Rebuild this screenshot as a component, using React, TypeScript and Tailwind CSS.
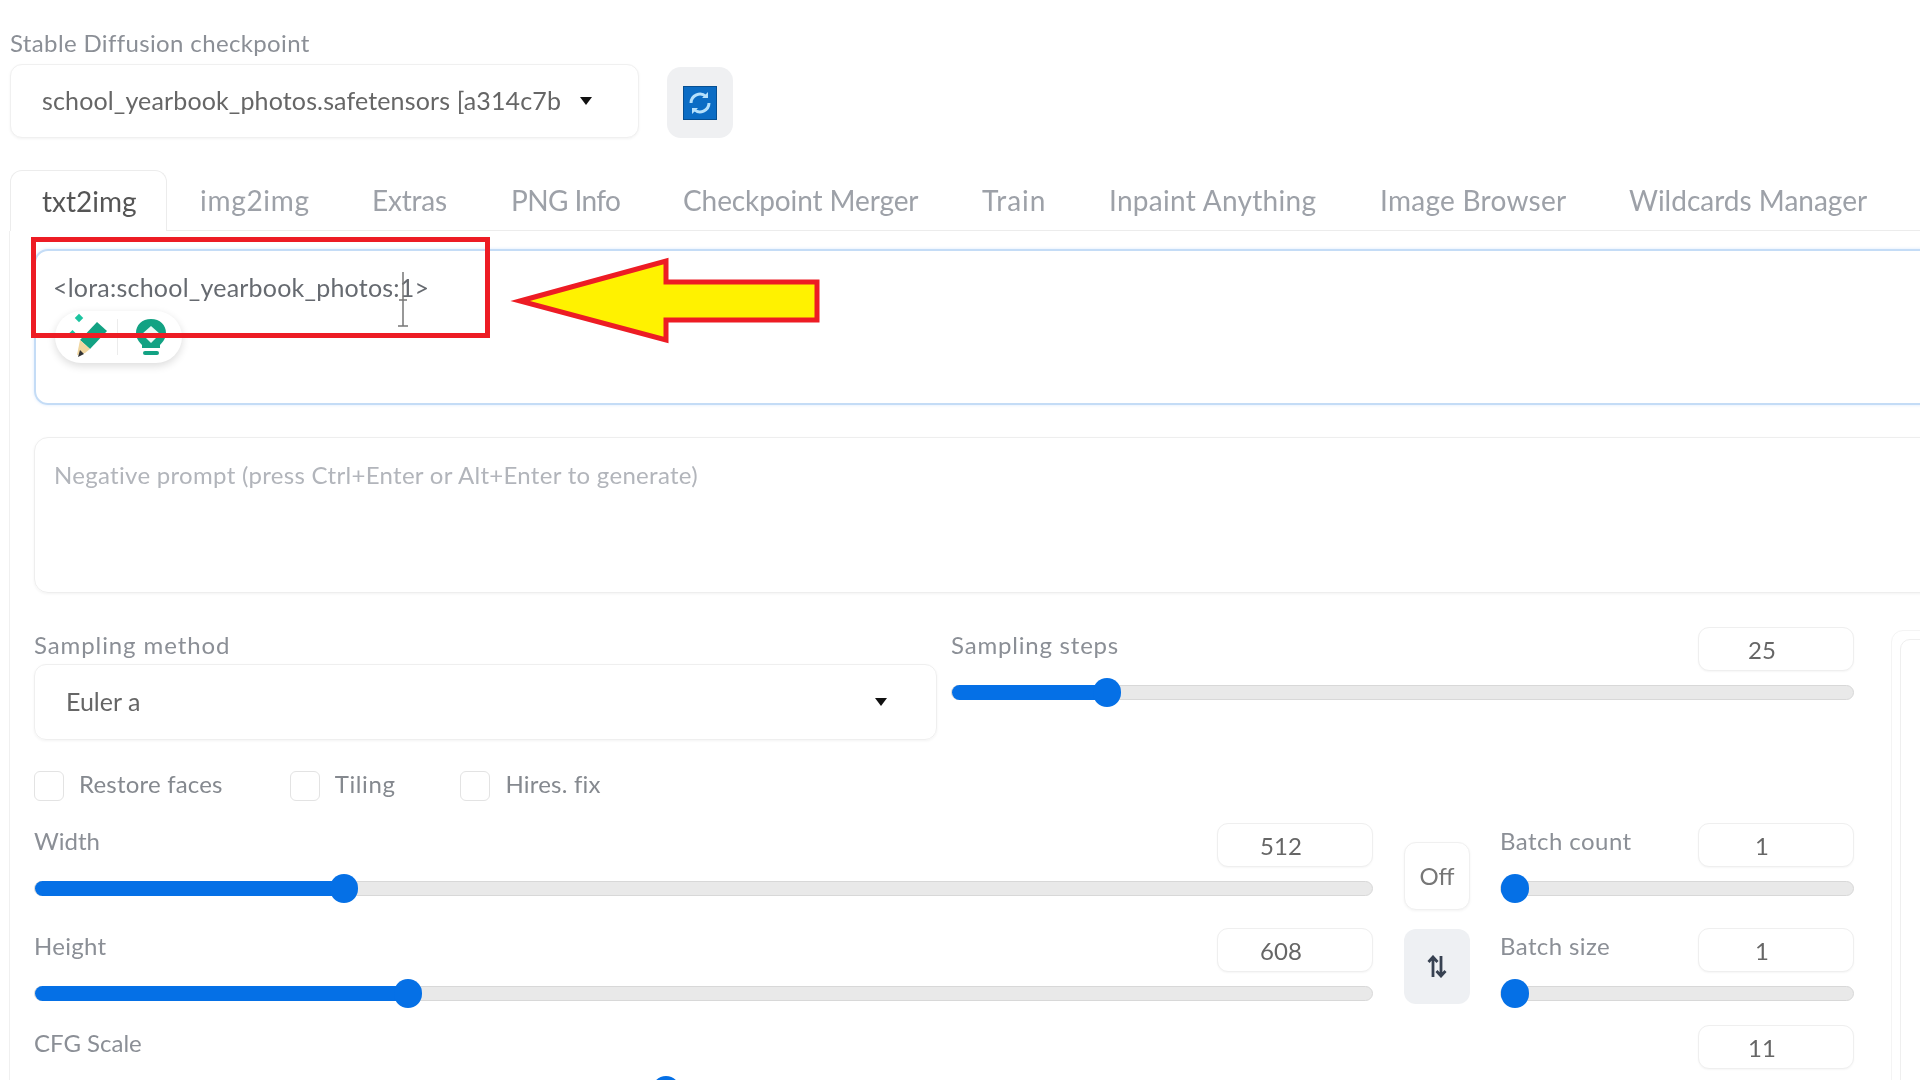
const tabs = [
  { name: 'img2img', cls: 'ml-[33px] w-[172px] tracking-[0.7px]' },
  { name: 'Extras', cls: 'w-[139px] tracking-[-0.2px]' },
  { name: 'PNG Info', cls: 'w-[172px] tracking-[-0.6px]' },
  { name: 'Checkpoint Merger', cls: 'w-[299px] tracking-[-0.1px]' },
  { name: 'Train', cls: 'w-[127px] tracking-[0.9px]' },
  { name: 'Inpaint Anything', cls: 'w-[271px] tracking-[0.3px]' },
  { name: 'Image Browser', cls: 'w-[249px] tracking-[0.28px]' },
  { name: 'Wildcards Manager', cls: 'tracking-[0px]' },
];

function Caret() {
  return (
    <svg width="12" height="8" viewBox="0 0 12 8" className="shrink-0">
      <path d="M0 0h12L6 8z" fill="#111" />
    </svg>
  );
}

function NumberBox({ value }: { value: string }) {
  return (
    <div className="w-[156px] h-[44px] shrink-0 flex items-center justify-center pr-[28px] pt-[1px] border border-[#efefef] rounded-[11px] bg-white text-[24px] text-[#666] shadow-[0_1px_2px_rgba(0,0,0,0.04)]">
      {value}
    </div>
  );
}

function SliderField({ label, value, pct, track = '' }: { label: string; value: string; pct: number; track?: string }) {
  return (
    <div>
      <div className="flex justify-between items-start">
        <span className={`mt-[3px] text-[24px] leading-[30px] text-[#8b8f96] ${track}`}>{label}</span>
        <NumberBox value={value} />
      </div>
      <div className="relative mt-[14px] h-[15px] rounded-full bg-[#e9e9e9] border border-[#d8d8d8]">
        <div className="h-full -my-px py-px box-content rounded-full bg-[#0570e6]" style={{ width: `${pct}%` }} />
        <div
          className="absolute top-1/2 w-[28px] h-[29px] -ml-[14px] -mt-[14.5px] rounded-full bg-[#0570e6]"
          style={{ left: `${pct}%` }}
        />
      </div>
    </div>
  );
}

function Check({ label, cls }: { label: string; cls: string }) {
  return (
    <div className={`flex items-center ${cls}`}>
      <div className="w-[30px] h-[30px] rounded-[6px] border border-[#e3e3e3] bg-white" />
      <span className="ml-[15px] -mt-[3px] text-[24px] text-[#85898f]">{label}</span>
    </div>
  );
}

function PromptTools() {
  return (
    <div className="mt-[9px] ml-[2px] w-[127px] h-[52px] flex items-center rounded-full bg-white shadow-[0_3px_8px_rgba(0,0,0,0.14)]">
      <svg width="62" height="52" viewBox="0 0 62 52" className="shrink-0">
        <rect x="21" y="4" width="6" height="6" fill="#1cc4a0" transform="rotate(45 24 7)" />
        <rect x="15" y="20" width="5" height="5" fill="#1cc4a0" transform="rotate(45 17.5 22.5)" />
        <path d="M42 11l10 9-17 18-10-9z" fill="#12a283" />
        <path d="M25 29l10 9-5 4-8 2z" fill="#f0d6a0" />
        <path d="M25 39l4 4-6 3z" fill="#333" />
      </svg>
      <div className="w-px h-[36px] bg-[#ececec]" />
      <svg width="64" height="52" viewBox="0 0 64 52" className="shrink-0">
        <path
          d="M33 8c-9 0-15 6-15 14 0 5 3 9 6 12v3h18v-3c3-3 6-7 6-12 0-8-6-14-15-14z"
          fill="#12a283"
        />
        <path d="M33 15l9 8-9 9-9-9z" fill="#e9faf5" />
        <rect x="25" y="40" width="16" height="4" rx="2" fill="#12a283" />
      </svg>
    </div>
  );
}

export default function App() {
  return (
    <div className="relative w-[1920px] h-[1080px] overflow-hidden bg-white blur-[0.6px] font-['Lato','Noto_Sans',sans-serif]">
      <div className="pt-[28px] pl-[10px]">
        <div className="text-[24px] leading-[30px] tracking-[0.36px] text-[#8b8f96]">Stable Diffusion checkpoint</div>

        <div className="mt-[6px] flex items-start">
          <div className="w-[629px] h-[74px] flex items-center pl-[31px] pr-[40px] gap-[18px] border border-[#f0f0f0] rounded-[12px] bg-white shadow-[0_1px_3px_rgba(0,0,0,0.05)]">
            <span className="w-[520px] shrink-0 overflow-hidden whitespace-nowrap text-[25px] tracking-[0.14px] text-[#666]">
              school_yearbook_photos.safetensors [a314c7b6]
            </span>
            <Caret />
          </div>
          <button className="ml-[28px] mt-[3px] w-[66px] h-[71px] flex items-center justify-center rounded-[14px] bg-[#eff0f2]">
            <svg width="34" height="34" viewBox="0 0 34 34">
              <rect width="34" height="34" fill="#0b6cc4" stroke="#064f92" strokeWidth="2" />
              <path d="M8 17a9 9 0 0 1 15-6.500M26 17a9 9 0 0 1-15 6.500" fill="none" stroke="#b5e0fb" strokeWidth="3" />
              <path d="M25 6v6h-6zM9 28v-6h6z" fill="#b5e0fb" />
            </svg>
          </button>
        </div>

        <div className="mt-[32px] h-[61px] flex border-b border-[#ececec]">
          <div className="w-[157px] h-[61px] -mb-px pl-[31px] flex items-center border border-b-0 border-[#ececec] rounded-t-[12px] bg-white text-[28px] text-[#555]">
            txt2img
          </div>
          {tabs.map((t) => (
            <div key={t.name} className={`${t.cls} flex items-center whitespace-nowrap text-[28px] text-[#9da1a8]`}>
              {t.name}
            </div>
          ))}
        </div>
      </div>

      <div className="ml-[9px] pl-[24px] pt-[18px] border-l border-[#f0f0f0] h-[849px]">
        <div className="w-[1950px] h-[156px] pt-[21px] pl-[17px] border-2 border-[#c4dcf6] rounded-[14px] shadow-[0_0_3px_rgba(96,165,250,0.25)]">
          <div className="text-[25px] leading-[30px] tracking-[0.22px] text-[#666a70]">&lt;lora:school_yearbook_photos:1&gt;</div>
          <PromptTools />
        </div>

        <div className="mt-[32px] w-[1950px] h-[156px] pt-[22px] pl-[19px] border border-[#eeeeee] rounded-[14px] shadow-[0_1px_3px_rgba(0,0,0,0.05)]">
          <div className="text-[24px] leading-[30px] tracking-[0.3px] text-[#b2b5bb]">
            Negative prompt (press Ctrl+Enter or Alt+Enter to generate)
          </div>
        </div>

        <div className="mt-[34px] flex items-start">
          <div className="w-[903px] pt-[3px]">
            <div className="text-[24px] leading-[30px] tracking-[0.9px] text-[#8b8f96]">Sampling method</div>
            <div className="mt-[4px] h-[76px] flex items-center justify-between pl-[31px] pr-[49px] border border-[#efefef] rounded-[12px] shadow-[0_1px_3px_rgba(0,0,0,0.05)]">
              <span className="text-[25px] text-[#666]">Euler a</span>
              <Caret />
            </div>
          </div>
          <div className="ml-[14px] w-[903px]">
            <SliderField label="Sampling steps" value="25" pct={17.2} track="tracking-[0.8px]" />
          </div>
        </div>

        <div className="pt-[30px] flex h-[61px]">
          <Check label="Restore faces" cls="tracking-[0.2px]" />
          <Check label="Tiling" cls="ml-[67px] tracking-[0.6px]" />
          <Check label="Hires. fix" cls="ml-[65px] tracking-[0.2px]" />
        </div>

        <div className="mt-[22px] flex items-start">
          <div className="w-[1339px] flex flex-col gap-[32px]">
            <SliderField label="Width" value="512" pct={23.1} />
            <SliderField label="Height" value="608" pct={27.9} track="tracking-[0.3px]" />
          </div>
          <div className="ml-[31px] mt-[19px] w-[66px] flex flex-col gap-[19px]">
            <div className="h-[68px] flex items-center justify-center rounded-[12px] border border-[#f0f0f0] bg-white text-[24px] text-[#777] shadow-[0_1px_3px_rgba(0,0,0,0.05)]">
              Off
            </div>
            <div className="h-[75px] flex items-center justify-center rounded-[12px] bg-[#eef0f3]">
              <svg width="20" height="23" viewBox="0 0 20 23" fill="none" stroke="#374151" strokeWidth="2.800">
                <path d="M6 22V2M1.500 7L6 2l4.500 5M14 1v20M9.500 16l4.500 5 4.500-5" />
              </svg>
            </div>
          </div>
          <div className="ml-[30px] w-[354px] flex flex-col gap-[32px]">
            <SliderField label="Batch count" value="1" pct={3.95} track="tracking-[0.45px]" />
            <SliderField label="Batch size" value="1" pct={3.95} track="tracking-[0.4px]" />
          </div>
          <div className="absolute left-[1891px] top-[630px] w-[60px] h-[500px] pt-[8px] pl-[8px] border border-[#f4f4f4] rounded-[12px]">
            <div className="w-full h-full border border-[#efefef] rounded-[10px]" />
          </div>
        </div>

        <div className="mt-[21px] w-[1820px]">
          <SliderField label="CFG Scale" value="11" pct={34.7} />
        </div>
      </div>

      {/* annotation drawn over the screenshot */}
      <div className="absolute left-[31px] top-[237px] w-[459px] h-[101px] border-[5px] border-[#ed1c24]" />
      <svg className="absolute left-[505px] top-[250px]" width="325" height="100" viewBox="0 0 325 100">
        <path
          d="M15 51L161 11V32H312V70H161V90z"
          fill="#fff200"
          stroke="#ed1c24"
          strokeWidth="5"
        />
      </svg>
      <svg className="absolute left-[396px] top-[270px]" width="14" height="58" viewBox="0 0 14 58">
        <path d="M7 2v54M3 30h8M2 56h10" fill="none" stroke="#777" strokeWidth="1.500" />
      </svg>
    </div>
  );
}
